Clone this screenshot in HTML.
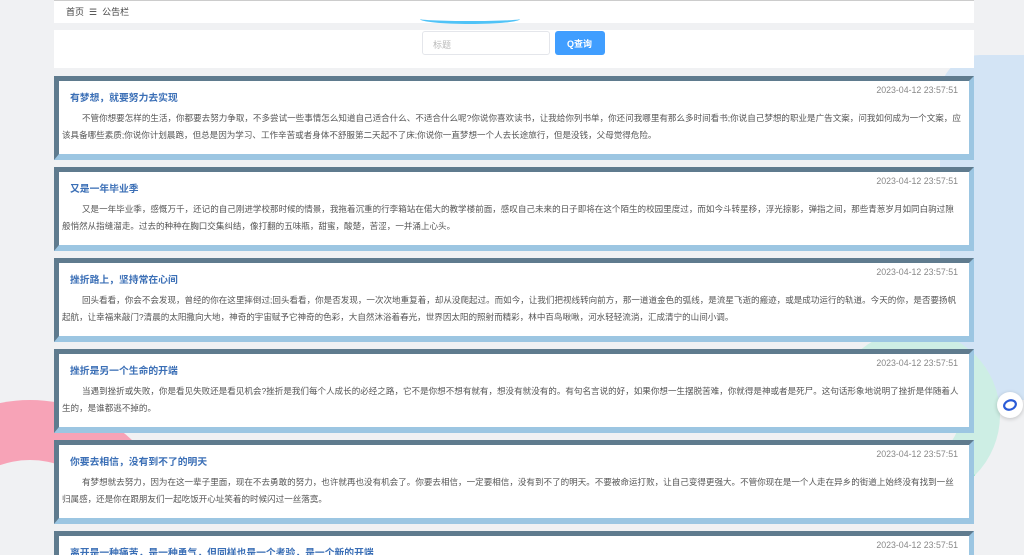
<!DOCTYPE html>
<html style="width:1024px;height:555px;overflow:hidden"><head><meta charset="utf-8"><style>
*{margin:0;padding:0;box-sizing:border-box}
body{width:1024px;height:555px;overflow:hidden;background:#f0f1f3;font-family:"Liberation Sans","Noto Sans CJK SC",sans-serif;position:relative}
.bg1{position:absolute;left:940px;top:55px;width:84px;height:345px;background:#d3e4f5;border-radius:40px 0 0 0}
.bg2{position:absolute;left:-120px;top:400px;width:300px;height:300px;border-radius:50%;border:60px solid #f7a3b7;border-right-color:transparent;border-bottom-color:#f6d3dd}
.bg3{position:absolute;left:830px;top:330px;width:170px;height:170px;border-radius:50%;border:40px solid #cdeee4;border-bottom-color:#72e0bd;border-left-color:transparent}
.top{position:absolute;left:54px;top:0;width:920px;height:23px;background:#fff;border-top:1px solid #ccc;font-size:9px;color:#444;padding:4px 0 0 12px}
.search{position:absolute;left:54px;top:30px;width:920px;height:38px;background:#fff}
.inp{position:absolute;left:368px;top:1px;width:128px;height:24px;border:1px solid #e4e6eb;border-radius:3px;font-size:9px;color:#bbb;padding:6px 10px}
.btn{position:absolute;left:501px;top:1px;width:50px;height:24px;background:#409eff;border-radius:3px;color:#fff;font-size:9px;font-weight:bold;padding:6px 0 0 12px}
.arc{position:absolute;left:420px;top:14px;width:100px;height:10px;border-bottom:3px solid #4fc3f7;border-radius:0 0 50% 50%}
.card{position:absolute;left:54px;width:920px;height:84px;background:#fff;border-style:solid;border-width:5px 5px 6px 5px;border-color:#5f7b8e #9cc6e2 #9cc6e2 #5f7b8e}
.t{position:absolute;left:11px;top:9px;font-size:9.8px;font-weight:bold;color:#3b6fb6}
.d{position:absolute;right:11px;top:4px;font-size:8.8px;color:#888}
.b{position:absolute;left:3px;right:7px;top:29px;font-size:8.55px;line-height:17px;color:#555;text-indent:20px}
.fab{position:absolute;left:997px;top:392px;width:26px;height:26px;border-radius:50%;background:#fff;box-shadow:0 1px 4px rgba(0,0,0,.2)}
</style></head><body>
<div class="bg1"></div><div class="bg2"></div><div class="bg3"></div>
<div class="top">首页 &nbsp;☰&nbsp; 公告栏</div>
<div class="arc"></div>
<div class="search"><div class="inp">标题</div><div class="btn">Q查询</div></div>

<div class="card" style="top:76px"><div class="t">有梦想，就要努力去实现</div><div class="d">2023-04-12 23:57:51</div><div class="b">不管你想要怎样的生活，你都要去努力争取，不多尝试一些事情怎么知道自己适合什么、不适合什么呢?你说你喜欢读书，让我给你列书单，你还问我哪里有那么多时间看书;你说自己梦想的职业是广告文案，问我如何成为一个文案，应该具备哪些素质;你说你计划晨跑，但总是因为学习、工作辛苦或者身体不舒服第二天起不了床;你说你一直梦想一个人去长途旅行，但是没钱，父母觉得危险。</div></div>
<div class="card" style="top:167px"><div class="t">又是一年毕业季</div><div class="d">2023-04-12 23:57:51</div><div class="b">又是一年毕业季，感慨万千，还记的自己刚进学校那时候的情景，我拖着沉重的行李箱站在偌大的教学楼前面，感叹自己未来的日子即将在这个陌生的校园里度过，而如今斗转星移，浮光掠影，弹指之间，那些青葱岁月如同白驹过隙般悄然从指缝溜走。过去的种种在胸口交集纠结，像打翻的五味瓶，甜蜜，酸楚，苦涩，一并涌上心头。</div></div>
<div class="card" style="top:258px"><div class="t">挫折路上，坚持常在心间</div><div class="d">2023-04-12 23:57:51</div><div class="b">回头看看，你会不会发现，曾经的你在这里摔倒过;回头看看，你是否发现，一次次地重复着，却从没爬起过。而如今，让我们把视线转向前方，那一道道金色的弧线，是流星飞逝的瘢迹，或是成功运行的轨道。今天的你，是否要扬帆起航，让幸福来敲门?清晨的太阳撒向大地，神奇的宇宙赋予它神奇的色彩，大自然沐浴着春光，世界因太阳的照射而精彩，林中百鸟啾啾，河水轻轻流淌，汇成清宁的山间小调。</div></div>
<div class="card" style="top:349px"><div class="t">挫折是另一个生命的开端</div><div class="d">2023-04-12 23:57:51</div><div class="b">当遇到挫折或失败，你是看见失败还是看见机会?挫折是我们每个人成长的必经之路，它不是你想不想有就有，想没有就没有的。有句名言说的好，如果你想一生摆脱苦难，你就得是神或者是死尸。这句话形象地说明了挫折是伴随着人生的，是谁都逃不掉的。</div></div>
<div class="card" style="top:440px"><div class="t">你要去相信，没有到不了的明天</div><div class="d">2023-04-12 23:57:51</div><div class="b">有梦想就去努力，因为在这一辈子里面，现在不去勇敢的努力，也许就再也没有机会了。你要去相信，一定要相信，没有到不了的明天。不要被命运打败，让自己变得更强大。不管你现在是一个人走在异乡的街道上始终没有找到一丝归属感，还是你在跟朋友们一起吃饭开心址笑着的时候闪过一丝落寞。</div></div>
<div class="card" style="top:531px"><div class="t">离开是一种痛苦，是一种勇气，但同样也是一个考验，是一个新的开端</div><div class="d">2023-04-12 23:57:51</div></div>
<div class="fab"><svg width="26" height="26" viewBox="0 0 26 26"><ellipse cx="13" cy="13" rx="6" ry="4.5" fill="none" stroke="#2a5bd7" stroke-width="2.2" transform="rotate(-20 13 13)"/></svg></div>
</body></html>
